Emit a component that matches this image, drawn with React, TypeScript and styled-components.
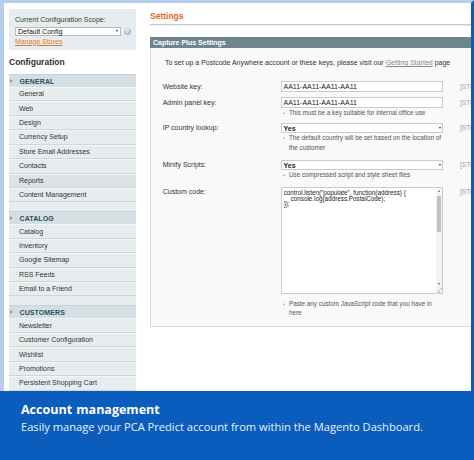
import React from "react";
import styled, { createGlobalStyle } from "styled-components";

const GlobalStyle = createGlobalStyle`
  html, body { margin: 0; padding: 0; }
  body {
    width: 474px;
    height: 460px;
    overflow: hidden;
    font-family: "Liberation Sans", Arial, Helvetica, sans-serif;
  }
`;

/* ---------- outer frame ---------- */

const Frame = styled.div`
  width: 474px;
  height: 460px;
  display: flex;
  flex-direction: column;
  background: #0a5cbd;
`;

const Screen = styled.div`
  flex: none;
  height: 391px;
  box-sizing: border-box;
  display: flex;
  align-items: flex-start;
  background: #fff;
  border-top: 3px solid #b6cdec;
  border-left: 4px solid #b6cdec;
  border-right: 3px solid #0a5cbd;
  overflow: hidden;
`;

/* ---------- sidebar ---------- */

const Sidebar = styled.aside`
  flex: none;
  width: 127px;
  margin: 6px 0 0 5px;
  display: flex;
  flex-direction: column;
`;

const ScopeBox = styled.div`
  height: 41px;
  box-sizing: border-box;
  padding: 6px 0 0 6px;
  background: #e7edee;
  font-size: 7px;
  color: #3a3a3a;
`;

const ScopeLabel = styled.div`
  line-height: 9px;
`;

const ScopeRow = styled.div`
  display: flex;
  align-items: center;
  gap: 3px;
  margin-top: 2.5px;
`;

const MiniSelect = styled.div<{ $width: number }>`
  width: ${(p) => p.$width}px;
  height: 9px;
  box-sizing: border-box;
  display: flex;
  align-items: center;
  justify-content: space-between;
  padding: 0 2px 0 2px;
  background: #fff;
  border: 1px solid #b9b9b9;
  font-size: 7px;
  color: #111;
`;

const DownMark = styled.span`
  width: 0;
  height: 0;
  border-left: 1.5px solid transparent;
  border-right: 1.5px solid transparent;
  border-top: 2.5px solid #222;
`;

const HelpIcon = styled.span`
  width: 7px;
  height: 7px;
  border-radius: 50%;
  background: radial-gradient(circle at 40% 35%, #d9e5f1 0%, #9fb6cf 70%);
  color: #fff;
  font-size: 5px;
  font-weight: bold;
  line-height: 7px;
  text-align: center;
`;

const ManageLink = styled.a`
  display: block;
  margin-top: 1px;
  line-height: 9px;
  color: #e0782f;
  text-decoration: underline;
`;

const ConfigHeading = styled.h2`
  margin: 0;
  height: 24px;
  padding-top: 1px;
  box-sizing: border-box;
  line-height: 23px;
  font-size: 8.5px;
  font-weight: bold;
  color: #2e2e2e;
  background: #fff;
`;

const Nav = styled.nav`
  display: flex;
  flex-direction: column;
  background: #e7edef;
`;

const GroupHeader = styled.div`
  height: 13px;
  box-sizing: border-box;
  display: flex;
  align-items: center;
  gap: 7px;
  padding-left: 0.5px;
  background: #d3dfe2;
  border-top: 1px solid #c6d2d5;
  font-size: 7px;
  font-weight: bold;
  color: #2f4d5b;
  letter-spacing: 0.1px;
`;

const GroupArrow = styled.span`
  width: 0;
  height: 0;
  border-top: 2px solid transparent;
  border-bottom: 2px solid transparent;
  border-left: 3px solid #86a1aa;
`;

const NavItem = styled.div<{ $active?: boolean }>`
  height: 14.43px;
  box-sizing: border-box;
  display: flex;
  align-items: center;
  padding-left: 10px;
  background: ${(p) => (p.$active ? "#dbe3e5" : "transparent")};
  border-bottom: 1px solid #cdd7da;
  box-shadow: inset 0 1px 0 #f3f6f7;
  font-size: 7px;
  color: #333;
  white-space: nowrap;
`;

const GroupSpacer = styled.div`
  height: 9px;
`;

/* ---------- main area ---------- */

const Main = styled.main`
  flex: 1;
  min-width: 0;
  margin-left: 14px;
  display: flex;
  flex-direction: column;
`;

const PageTitle = styled.h1`
  margin: 0;
  padding: 8px 0 3px 0;
  font-size: 8.5px;
  line-height: 10px;
  font-weight: bold;
  color: #e2661d;
  border-bottom: 1px solid #c9c9c9;
  box-shadow: 0 1px 0 #ececec;
`;

const SectionBar = styled.div`
  margin-top: 11.5px;
  height: 11px;
  padding-left: 3px;
  line-height: 11px;
  background: #6e858d;
  color: #fff;
  font-size: 7px;
  font-weight: bold;
`;

const Panel = styled.div`
  margin-right: -2px;
  padding: 10.8px 0 8px 11.7px;
  background: #f9f9f9;
  border: 1px solid #dcdcdc;
  border-top: 0;
`;

const Intro = styled.p`
  margin: 0 0 0 2.3px;
  font-size: 7px;
  line-height: 10px;
  color: #333;
  white-space: nowrap;
`;

const StartedLink = styled.a`
  color: #8a8a8a;
  text-decoration: underline;
`;

const Fields = styled.div`
  margin-top: 12.7px;
  display: flex;
  flex-direction: column;
`;

const FieldRow = styled.div<{ $top: number }>`
  margin-top: ${(p) => p.$top}px;
  display: grid;
  grid-template-columns: 118.3px 162px auto;
  align-items: start;
`;

const Label = styled.label<{ $h: number }>`
  font-size: 7px;
  line-height: ${(p) => p.$h}px;
  color: #333;
  white-space: nowrap;
`;

const Value = styled.div`
  display: flex;
  flex-direction: column;
`;

const TextInput = styled.div`
  height: 11px;
  box-sizing: border-box;
  padding-left: 1.5px;
  background: #fff;
  border: 1px solid #cbcbcb;
  font-size: 7px;
  line-height: 9px;
  color: #1a1a1a;
`;

const SelectBox = styled.div`
  height: 10px;
  box-sizing: border-box;
  display: flex;
  align-items: center;
  justify-content: space-between;
  padding: 0 1px 0 1.5px;
  background: #fff;
  border: 1px solid #cbcbcb;
  font-size: 7px;
  font-weight: bold;
  color: #1a1a1a;
`;

const Note = styled.div<{ $top?: number }>`
  position: relative;
  margin-top: ${(p) => p.$top ?? 0}px;
  padding-left: 8px;
  font-size: 6.3px;
  line-height: 9.8px;
  color: #555;

  &::before {
    content: "";
    position: absolute;
    left: 2.5px;
    top: 4px;
    border-left: 1.3px solid transparent;
    border-right: 1.3px solid transparent;
    border-bottom: 2px solid #a5a5a5;
  }
`;

const Scope = styled.span<{ $h: number }>`
  padding-left: 17px;
  font-size: 6.5px;
  line-height: ${(p) => p.$h}px;
  color: #9c9c9c;
  white-space: nowrap;
`;

const CodeBox = styled.div`
  height: 106.7px;
  box-sizing: border-box;
  display: flex;
  background: #fff;
  border: 1px solid #cbcbcb;
`;

const Code = styled.pre`
  flex: 1;
  margin: 0;
  padding: 2px 0 0 1.7px;
  font-family: "Liberation Sans", Arial, sans-serif;
  font-size: 6.3px;
  line-height: 5.8px;
  color: #1a1a1a;
`;

const ScrollBar = styled.div`
  width: 6px;
  display: flex;
  flex-direction: column;
  background: #f4f4f4;
`;

const ArrowCell = styled.div`
  height: 6px;
  display: flex;
  align-items: center;
  justify-content: center;
`;

const UpMark = styled.span`
  width: 0;
  height: 0;
  border-left: 1.5px solid transparent;
  border-right: 1.5px solid transparent;
  border-bottom: 2px solid #606060;
`;

const DownArrowMark = styled.span`
  width: 0;
  height: 0;
  border-left: 1.5px solid transparent;
  border-right: 1.5px solid transparent;
  border-top: 2px solid #606060;
`;

const Track = styled.div`
  flex: 1;
  padding: 1.7px 1px 0 1px;
`;

const Thumb = styled.div`
  height: 36.7px;
  background: #c2c2c2;
`;

const Grip = styled.div`
  height: 6px;
  background:
    linear-gradient(135deg, transparent 55%, #b5b5b5 55%, #b5b5b5 63%, transparent 63%, transparent 75%, #b5b5b5 75%, #b5b5b5 83%, transparent 83%);
`;

/* ---------- banner ---------- */

const Banner = styled.section`
  flex: 1;
  padding: 9.8px 0 0 21px;
  background: #0a5cbd;
  color: #fff;
  font-family: "Open Sans", "Liberation Sans", Arial, sans-serif;
`;

const BannerTitle = styled.h2`
  margin: 0;
  font-size: 12.5px;
  line-height: 17px;
  font-weight: 700;
  word-spacing: 1px;
`;

const BannerText = styled.p`
  margin: 0;
  font-size: 11.13px;
  line-height: 17px;
  color: #eaf1fa;
  white-space: nowrap;
`;

/* ---------- data ---------- */

const groups = [
  {
    title: "GENERAL",
    items: [
      "General",
      "Web",
      "Design",
      "Currency Setup",
      "Store Email Addresses",
      "Contacts",
      "Reports",
      "Content Management",
    ],
  },
  {
    title: "CATALOG",
    items: ["Catalog", "Inventory", "Google Sitemap", "RSS Feeds", "Email to a Friend"],
  },
  {
    title: "CUSTOMERS",
    items: [
      "Newsletter",
      "Customer Configuration",
      "Wishlist",
      "Promotions",
      "Persistent Shopping Cart",
    ],
  },
];

const codeText = `control.listen("populate", function(address) {
    console.log(address.PostalCode);
});`;

export default function App() {
  return (
    <>
      <GlobalStyle />
      <Frame>
        <Screen>
          <Sidebar>
            <ScopeBox>
              <ScopeLabel>Current Configuration Scope:</ScopeLabel>
              <ScopeRow>
                <MiniSelect $width={106}>
                  <span>Default Config</span>
                  <DownMark />
                </MiniSelect>
                <HelpIcon>?</HelpIcon>
              </ScopeRow>
              <ManageLink>Manage Stores</ManageLink>
            </ScopeBox>
            <ConfigHeading>Configuration</ConfigHeading>
            <Nav>
              {groups.map((g, gi) => (
                <React.Fragment key={g.title}>
                  {gi > 0 && <GroupSpacer />}
                  <GroupHeader>
                    <GroupArrow />
                    {g.title}
                  </GroupHeader>
                  {g.items.map((item) => (
                    <NavItem key={item} $active={item === "Reports"}>
                      {item}
                    </NavItem>
                  ))}
                </React.Fragment>
              ))}
            </Nav>
          </Sidebar>

          <Main>
            <PageTitle>Settings</PageTitle>
            <SectionBar>Capture Plus Settings</SectionBar>
            <Panel>
              <Intro>
                To set up a Postcode Anywhere account or these keys, please visit our{" "}
                <StartedLink>Getting Started</StartedLink> page
              </Intro>
              <Fields>
                <FieldRow $top={0}>
                  <Label $h={11}>Website key:</Label>
                  <Value>
                    <TextInput>AA11-AA11-AA11-AA11</TextInput>
                  </Value>
                  <Scope $h={11}>[STORE VIEW]</Scope>
                </FieldRow>
                <FieldRow $top={4.7}>
                  <Label $h={11}>Admin panel key:</Label>
                  <Value>
                    <TextInput>AA11-AA11-AA11-AA11</TextInput>
                    <Note>This must be a key suitable for internal office use</Note>
                  </Value>
                  <Scope $h={11}>[STORE VIEW]</Scope>
                </FieldRow>
                <FieldRow $top={5.8}>
                  <Label $h={10}>IP country lookup:</Label>
                  <Value>
                    <SelectBox>
                      <span>Yes</span>
                      <DownMark />
                    </SelectBox>
                    <Note>
                      The default country will be set based on the location of the customer
                    </Note>
                  </Value>
                  <Scope $h={10}>[STORE VIEW]</Scope>
                </FieldRow>
                <FieldRow $top={7.4}>
                  <Label $h={10}>Minify Scripts:</Label>
                  <Value>
                    <SelectBox>
                      <span>Yes</span>
                      <DownMark />
                    </SelectBox>
                    <Note>Use compressed script and style sheet files</Note>
                  </Value>
                  <Scope $h={10}>[STORE VIEW]</Scope>
                </FieldRow>
                <FieldRow $top={6.8}>
                  <Label $h={10}>Custom code:</Label>
                  <Value>
                    <CodeBox>
                      <Code>{codeText}</Code>
                      <ScrollBar>
                        <ArrowCell>
                          <UpMark />
                        </ArrowCell>
                        <Track>
                          <Thumb />
                        </Track>
                        <ArrowCell>
                          <DownArrowMark />
                        </ArrowCell>
                        <Grip />
                      </ScrollBar>
                    </CodeBox>
                    <Note $top={5}>Paste any custom JavaScript code that you have in here</Note>
                  </Value>
                  <Scope $h={10}>[STORE VIEW]</Scope>
                </FieldRow>
              </Fields>
            </Panel>
          </Main>
        </Screen>

        <Banner>
          <BannerTitle>Account management</BannerTitle>
          <BannerText>
            Easily manage your PCA Predict account from within the Magento Dashboard.
          </BannerText>
        </Banner>
      </Frame>
    </>
  );
}
